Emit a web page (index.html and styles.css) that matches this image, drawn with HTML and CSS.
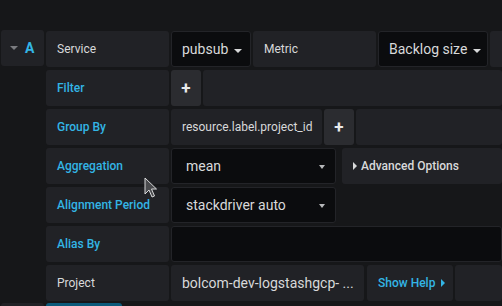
FILE: index.html
```html
<!DOCTYPE html>
<html>
<head>
<meta charset="utf-8">
<link rel="stylesheet" href="styles.css">
</head>
<body>
<div class="editor">
  <div class="qhead"><span class="caret-down gray"></span><span class="qletter">A</span></div>
  <div class="rows">
    <div class="row">
      <div class="label w-label">Service</div>
      <div class="select w-pubsub">pubsub<span class="caret-down"></span></div>
      <div class="label w-label">Metric</div>
      <div class="select w-metric">Backlog size<span class="caret-down"></span></div>
      <div class="label grow"></div>
    </div>
    <div class="row">
      <div class="label w-label blue">Filter</div>
      <div class="btn-plus">+</div>
      <div class="label grow"></div>
    </div>
    <div class="row">
      <div class="label w-label blue">Group By</div>
      <div class="label value w-group">resource.label.project_id</div>
      <div class="btn-plus">+</div>
      <div class="label grow"></div>
    </div>
    <div class="row">
      <div class="label w-label blue">Aggregation</div>
      <div class="select full w-agg">mean<span class="caret-down small"></span></div>
      <div class="label grow adv"><span class="caret-right"></span>Advanced Options</div>
    </div>
    <div class="row">
      <div class="label w-label blue">Alignment Period</div>
      <div class="select full w-agg">stackdriver auto<span class="caret-down small"></span></div>
    </div>
    <div class="row">
      <div class="label w-label blue">Alias By</div>
      <div class="input grow"></div>
    </div>
    <div class="row">
      <div class="label w-label">Project</div>
      <div class="label bigvalue w-project">bolcom-dev-logstashgcp- ...</div>
      <div class="label blue w-help">Show Help<span class="caret-right blue-caret"></span></div>
      <div class="label grow"></div>
    </div>
  </div>
</div>
<div class="footer">
  <div class="fhead"></div>
  <div class="fbtn"></div>
</div>
<svg class="cursor" width="14" height="22" viewBox="0 0 14 22">
  <path d="M1 1 L1 17 L5 13 L8 20 L10.5 19 L7.5 12 L12.5 12 Z" fill="#4a4b4e" stroke="#d8d9da" stroke-width="1" stroke-linejoin="round"/>
</svg>
</body>
</html>
```
FILE: styles.css
```css
html, body {
  margin: 0;
  padding: 0;
}
body {
  width: 502px;
  height: 306px;
  overflow: hidden;
  background: #161719;
  font-family: Roboto, "Liberation Sans", sans-serif;
  color: #d8d9da;
  position: relative;
}
.editor {
  display: flex;
  padding-top: 30px;
}
.qhead {
  width: 43px;
  height: 36px;
  flex: none;
  margin-left: 1px;
  background: #212226;
  border-radius: 3px;
  display: flex;
  align-items: center;
  box-sizing: border-box;
  padding-left: 9px;
}
.qletter {
  color: #33b5e5;
  font-weight: 700;
  font-size: 14px;
  margin-left: 7px;
}
.rows {
  margin-left: 2px;
  padding-top: 1px;
  display: flex;
  flex-direction: column;
  gap: 3px;
  flex: 1;
  min-width: 0;
}
.row {
  display: flex;
  gap: 2px;
  height: 36px;
}
.label {
  background: #212226;
  border-radius: 3px;
  font-size: 12px;
  font-weight: 400;
  line-height: 36px;
  padding: 0 11px;
  box-sizing: border-box;
  white-space: nowrap;
  display: flex;
  align-items: center;
}
.w-label { width: 123px; flex: none; }
.blue { color: #33b5e5; font-weight: 500; }
.grow { flex: 1; min-width: 0; }
.value {
  font-weight: 400;
  font-size: 12px;
}
.w-group { width: 151px; flex: none; }
.bigvalue {
  font-weight: 400;
  font-size: 14px;
}
.w-project { width: 193px; flex: none; margin-right: 1px; }
.w-help { width: 86px; flex: none; }
.select {
  background: #0b0c0e;
  border: 1px solid #232428;
  border-radius: 3px;
  box-sizing: border-box;
  font-size: 14px;
  padding: 0 10px;
  display: flex;
  align-items: center;
  white-space: nowrap;
}
.w-pubsub { width: 80px; flex: none; }
.w-metric { width: 110px; flex: none; }
.w-agg { width: 165px; flex: none; margin-right: 2px; }
.select.full { justify-content: space-between; padding-left: 14px; }
.input {
  background: #0b0c0e;
  border: 1px solid #232428;
  border-radius: 3px;
  box-sizing: border-box;
}
.btn-plus {
  width: 30px;
  flex: none;
  background: #2b2c30;
  border-radius: 3px;
  color: #e9eaeb;
  font-size: 17px;
  font-weight: 700;
  display: flex;
  align-items: center;
  justify-content: center;
}
.caret-down {
  display: inline-block;
  width: 0;
  height: 0;
  border-left: 4px solid transparent;
  border-right: 4px solid transparent;
  border-top: 4px solid #d8d9da;
  margin-left: 6px;
  margin-top: 3px;
}
.caret-down.gray {
  border-top-color: #7b7c80;
  margin: 0;
}
.caret-down.small {
  border-left-width: 3px;
  border-right-width: 3px;
  border-top-width: 4px;
  border-top-color: #b8b9bb;
  margin-top: 2px;
}
.caret-right {
  display: inline-block;
  width: 0;
  height: 0;
  border-top: 4px solid transparent;
  border-bottom: 4px solid transparent;
  border-left: 4px solid #d8d9da;
  margin-right: 4px;
}
.blue-caret {
  border-left-color: #33b5e5;
  margin-right: 0;
  margin-left: 6px;
}
.adv {
  margin-left: 2px;
  font-size: 12px;
  font-weight: 500;
}
.footer {
  display: flex;
  margin-top: 2px;
  height: 3px;
}
.fhead {
  width: 43px;
  margin-left: 1px;
  background: #202125;
  border-radius: 3px 3px 0 0;
}
.fbtn {
  width: 76px;
  margin-left: 2px;
  background: #0b5a7a;
  border-radius: 3px 3px 0 0;
}
.cursor {
  position: absolute;
  left: 144px;
  top: 177px;
}
```
